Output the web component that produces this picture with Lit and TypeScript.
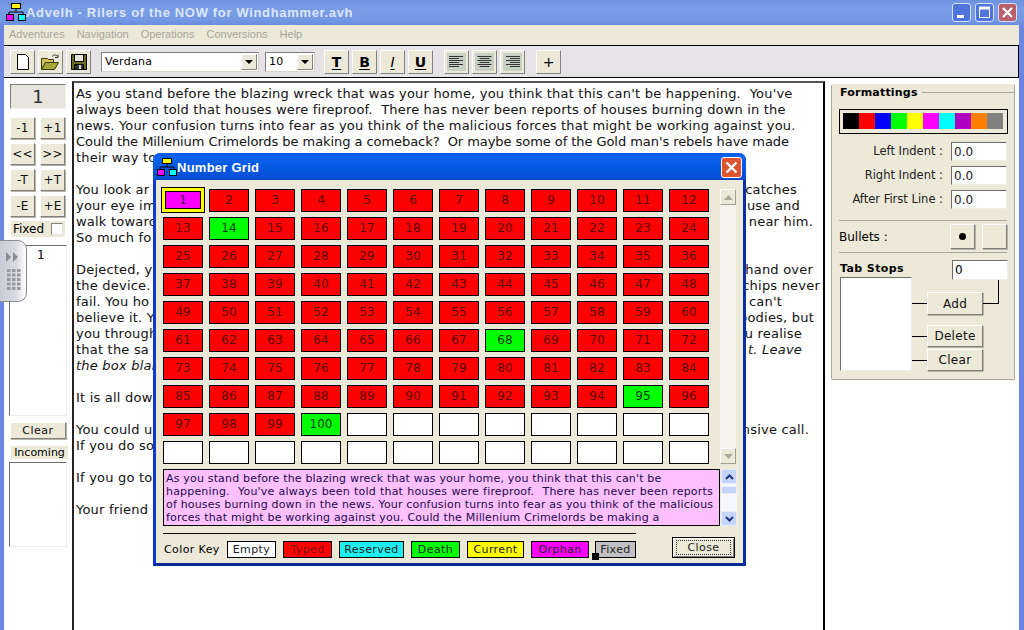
import { LitElement, html, css, svg } from 'lit';
import { customElement } from 'lit/decorators.js';

// [left part, right part, width up to the end of the right part]
const STORY: Array<[string, string?, number?]> = [
  ['As you stand before the blazing wreck that was your home, you think that this can\'t be happening.  You\'ve'],
  ['always been told that houses were fireproof.  There has never been reports of houses burning down in the'],
  ['news. Your confusion turns into fear as you think of the malicious forces that might be working against you.'],
  ['Could the Millenium Crimelords be making a comeback?  Or maybe some of the Gold man\'s rebels have made'],
  ['their way to'],
  [''],
  ['You look ar', 'catches', 721],
  ['your eye im', 'use and', 724],
  ['walk toward', 't near him.', 737],
  ['So much fo'],
  [''],
  ['Dejected, y', 'hand over', 737],
  ['the device.', 'chips never', 744],
  ['fail. You ho', 'can\'t', 706],
  ['believe it. Y', 'bodies, but', 738],
  ['you through', 'u realise', 726],
  ['that the sa', 't. Leave', 726],
  ['the box blan'],
  [''],
  ['It is all dow'],
  [''],
  ['You could u', 'nsive call.', 733],
  ['If you do so'],
  [''],
  ['If you go to'],
  [''],
  ['Your friend'],
];

// lines whose width drifts from the shared letter spacing
const STORY_SPACING: Record<number, number> = { 0: 0.21, 1: 0.17, 2: 0.17, 3: -0.06 };

const PREVIEW = [
  'As you stand before the blazing wreck that was your home, you think that this can\'t be',
  'happening.  You\'ve always been told that houses were fireproof.  There has never been reports',
  'of houses burning down in the news. Your confusion turns into fear as you think of the malicious',
  'forces that might be working against you. Could the Millenium Crimelords be making a',
];

const SWATCHES = ['#000', '#f00', '#00f', '#0f0', '#ff0', '#f0f', '#0ff', '#b000c0', '#ff8000', '#808080'];
const GREEN = [14, 68, 95, 100];
const KEYS: Array<[string, string, number]> = [
  ['Empty', '#fff', 49],
  ['Typed', '#f00', 49],
  ['Reserved', '#1ef0f0', 65],
  ['Death', '#0f0', 49],
  ['Current', '#ff0', 57],
  ['Orphan', '#f0f', 58],
];

const orgIcon = svg`
  <rect x="5.5" y="0.5" width="9" height="5" fill="#ff0" stroke="#000"/>
  <path d="M10 6v3M3 9h14M3 9v2M17 9v2" stroke="#000" fill="none"/>
  <rect x="0.5" y="11.5" width="7" height="6" fill="#f0f" stroke="#000"/>
  <rect x="12.5" y="11.5" width="7" height="6" fill="#0ff" stroke="#000"/>
`;

@customElement('app-root')
export class AppRoot extends LitElement {
  static styles = css`
    :host {
      display: block;
      width: 1024px;
      height: 630px;
      overflow: hidden;
      position: relative;
      font-family: "DejaVu Sans", Verdana, sans-serif;
      font-size: 12px;
      color: #000;
    }
    .win {
      height: 630px;
      display: flex;
      flex-direction: column;
      background: #6c84e2;
    }
    .titlebar {
      height: 25px;
      flex: none;
      box-sizing: border-box;
      display: flex;
      align-items: center;
      padding: 0 7px 1px 6px;
      background: linear-gradient(180deg, #6e92de 0%, #7a9de6 40%, #7398e4 80%, #6c8ddc 100%);
      color: #dbe6fa;
      font: bold 13px "Liberation Sans", Arial, sans-serif;
      letter-spacing: 0.66px;
    }
    .titlebar svg { flex: none; }
    .titlebar .cap { flex: 1; }
    .wbtn {
      width: 19px;
      height: 19px;
      margin-left: 4px;
      border: 1px solid #d6e0f6;
      border-radius: 3px;
      background: #4f74dc;
      display: flex;
      align-items: center;
      justify-content: center;
      box-sizing: border-box;
    }
    .wbtn.close { background: #b8606c; }
    .inner {
      flex: 1;
      min-height: 0;
      margin: 0 5px 0 4px;
      background: #fff;
      display: flex;
      flex-direction: column;
    }
    .menu {
      height: 20px;
      flex: none;
      box-sizing: border-box;
      padding: 0 0 2px 5px;
      background: #ece9d8;
      display: flex;
      align-items: center;
      gap: 12px;
      color: #a8a69c;
      font: 11px "Liberation Sans", Arial, sans-serif;
    }
    .toolbar {
      height: 33px;
      flex: none;
      box-sizing: border-box;
      border-top: 1px solid #000;
      border-bottom: 1px solid #000;
      border-right: 1px solid #000;
      background: #e6e3e6;
      display: flex;
      align-items: center;
      padding-left: 6px;
    }
    .tb {
      width: 25px;
      height: 24px;
      box-sizing: border-box;
      margin-right: 3px;
      background: #ece9d8;
      border: 1px solid;
      border-color: #fff #808080 #808080 #fff;
      display: flex;
      align-items: center;
      justify-content: center;
      font: bold 14px "DejaVu Sans", sans-serif;
      flex: none;
    }
    .tb.u { text-decoration: underline; text-underline-offset: 2px; }
    .tb .hl {
      width: 19px;
      height: 18px;
      background: #c8d0c4;
      display: flex;
      align-items: center;
      justify-content: center;
    }
    .combo {
      height: 20px;
      box-sizing: border-box;
      background: #fff;
      border: 1px solid;
      border-color: #808080 #d8d4c8 #d8d4c8 #808080;
      display: flex;
      align-items: center;
      justify-content: space-between;
      padding-left: 3px;
      font-size: 11px;
      letter-spacing: 0.3px;
      flex: none;
    }
    .combo .arr {
      width: 16px;
      height: 16px;
      margin-right: 1px;
      background: #ece9d8;
      border: 1px solid;
      box-sizing: border-box;
      border-color: #fff #808080 #808080 #fff;
      display: flex;
      align-items: center;
      justify-content: center;
    }
    .combo .arr i {
      border: 4px solid transparent;
      border-top: 4px solid #000;
      border-bottom: 0;
    }
    .main {
      flex: 1;
      min-height: 0;
      display: flex;
    }
    .left {
      width: 68px;
      flex: none;
      box-sizing: border-box;
      padding: 6px 0 0 5px;
      display: flex;
      flex-direction: column;
      align-items: flex-start;
    }
    .pageno {
      width: 56px;
      height: 25px;
      box-sizing: border-box;
      background: #e6e4dc;
      border: 1px solid;
      border-color: #808080 #f4f2ea #f4f2ea #808080;
      text-align: center;
      font-size: 18px;
      line-height: 23px;
      color: #333;
      margin: 0 0 8px 1px;
    }
    .nav {
      display: grid;
      grid-template-columns: 25px 25px;
      column-gap: 5px;
      row-gap: 4px;
      margin-left: 1px;
    }
    .btn {
      box-sizing: border-box;
      background: #ece9d8;
      border: 1px solid;
      border-color: #fff #808080 #808080 #fff;
      box-shadow: 1px 1px 0 #b8b4a4;
      display: flex;
      align-items: center;
      justify-content: center;
      font-size: 12px;
      color: #111;
      letter-spacing: 0.3px;
    }
    .nav .btn { height: 22px; }
    .fixed {
      width: 54px;
      height: 16px;
      background: #ece9d8;
      margin: 4px 0 0 2px;
      display: flex;
      align-items: center;
      justify-content: space-between;
      padding-left: 2px;
      box-sizing: border-box;
      font-size: 12px;
    }
    .fixed i {
      width: 10px;
      height: 10px;
      margin-right: 2px;
      background: #fff;
      border: 1px solid;
      border-color: #808080 #e8e6dc #e8e6dc #808080;
    }
    .sunken {
      box-sizing: border-box;
      background: #fff;
      border: 1px solid;
      border-color: #6e6e68 #f0eee4 #f0eee4 #6e6e68;
    }
    .pagelist {
      width: 58px;
      height: 171px;
      margin-top: 8px;
      padding: 2px 0 0 27px;
      font-size: 12px;
    }
    .clearbtn {
      width: 56px;
      height: 17px;
      margin: 6px 0 0 1px;
      padding-bottom: 1px;
      font-size: 11px;
      letter-spacing: 0.5px;
    }
    .incoming {
      width: 57px;
      height: 13px;
      margin: 7px 0 3px 2px;
      background: #ece9d8;
      font-size: 11px;
      line-height: 13px;
      text-align: center;
    }
    .inbox { width: 58px; height: 85px; }
    .story {
      width: 753px;
      flex: none;
      box-sizing: border-box;
      margin-top: 3px;
      border: 2px solid #000;
      border-left-color: #222;
      border-top-color: #555;
      border-bottom: none;
      padding: 3px 0 0 2px;
      font-size: 13px;
      line-height: 16px;
      letter-spacing: 0.21px;
      color: #111;
      overflow: hidden;
    }
    .line {
      height: 16px;
      white-space: pre;
      display: flex;
      justify-content: space-between;
    }
    .line em { font-style: italic; }
    .side {
      width: 184px;
      height: 296px;
      margin: 6px 0 0 6px;
      flex: none;
      box-sizing: border-box;
      background: #ece9d8;
      border: 1px solid #a8a698;
      border-top-color: #ece9d8;
      border-radius: 2px;
    }
    .side .legend {
      font: bold 11px "DejaVu Sans", sans-serif;
      padding: 0 8px;
      height: 15px;
      line-height: 15px;
      letter-spacing: 0.2px;
      display: flex;
      align-items: center;
      gap: 4px;
    }
    .side .legend::after {
      content: "";
      flex: 1;
      height: 1px;
      background: #a8a698;
      margin-right: -8px;
    }
    .palette {
      width: 169px;
      height: 25px;
      box-sizing: border-box;
      margin: 9px 0 0 7px;
      border: 1px solid #000;
      padding: 3px;
      display: flex;
      background: #ece9d8;
    }
    .palette i { width: 16px; height: 16px; flex: none; }
    .row {
      display: flex;
      align-items: center;
      justify-content: flex-end;
      height: 19px;
      margin: 5px 7px 0 0;
      font-size: 11.5px;
      color: #222;
    }
    .row span { margin: -2px 8px 0 0; }
    .row .sunken {
      width: 56px;
      height: 19px;
      font-size: 12px;
      line-height: 18px;
      padding-left: 2px;
    }
    .first { margin-top: 8px; }
    .rule { height: 1px; background: #a8a698; margin: 0 7px; }
    .bullets {
      display: flex;
      align-items: center;
      height: 25px;
      margin: 3px 7px;
      font-size: 12px;
    }
    .bullets span { flex: 1; }
    .bullets .btn { width: 25px; height: 25px; margin-left: 7px; }
    .bullets .btn i {
      width: 7px;
      height: 7px;
      border-radius: 50%;
      background: #000;
    }
    .tabs {
      display: grid;
      grid-template-columns: 72px 15px 56px 16px;
      grid-template-rows: 17px 15px 23px 10px 22px 2px 22px;
      margin: 7px 0 0 8px;
    }
    .tabs b {
      grid-column: 1 / 3;
      grid-row: 1;
      font-size: 11px;
      line-height: 13px;
      letter-spacing: 0.4px;
      margin-top: 2px;
    }
    .tabs .tabinput {
      grid-column: 3 / 5;
      grid-row: 1 / 3;
      width: 56px;
      height: 20px;
      margin-left: 25px;
      font-size: 12px;
      line-height: 18px;
      padding-left: 2px;
    }
    .tabs .tablist { grid-column: 1; grid-row: 2 / 8; height: 94px; }
    .tabs .btn { grid-column: 3; font-size: 12px; letter-spacing: 0.3px; }
    .tick {
      grid-column: 2;
      height: 1px;
      background: #000;
      align-self: center;
    }
    .elbow {
      grid-column: 4;
      grid-row: 2 / 4;
      box-sizing: border-box;
      border-right: 1px solid #000;
      border-bottom: 1px solid #000;
      height: 24px;
      margin-top: 3px;
      width: 16px;
      align-self: start;
      z-index: 1;
    }
    /* floating dialog */
    .dialog {
      position: absolute;
      left: 153px;
      top: 153px;
      width: 593px;
      height: 413px;
      box-sizing: border-box;
      background: #ece9d8;
      border: 3px solid #0a3bd0;
      border-top: none;
      border-bottom-color: #0a2a9c;
      border-right-color: #0a2ea8;
      border-radius: 7px 7px 0 0;
    }
    .dtitle {
      height: 27px;
      box-sizing: border-box;
      margin: 0 -3px;
      display: flex;
      align-items: center;
      padding: 1px 4px 0 4px;
      background: linear-gradient(180deg, #0a5ae8 0%, #0a64f0 15%, #0456de 60%, #0a50d8 90%, #0a46c0 100%);
      color: #fff;
      font: bold 13px "Liberation Sans", Arial, sans-serif;
      letter-spacing: 0.25px;
      border-radius: 7px 7px 0 0;
    }
    .dtitle .cap { flex: 1; }
    .dclose {
      width: 21px;
      height: 21px;
      box-sizing: border-box;
      border: 1px solid #fff;
      border-radius: 3px;
      background: #dc5430;
      display: flex;
      align-items: center;
      justify-content: center;
    }
    .dbody { padding: 9px 0 0 7px; }
    .top { display: flex; }
    .grid {
      display: grid;
      grid-template-columns: repeat(12, 40px);
      grid-auto-rows: 23px;
      column-gap: 6px;
      row-gap: 5px;
    }
    .cell {
      box-sizing: border-box;
      border: 1px solid #000;
      background: #f00;
      color: #5a0a0a;
      text-align: center;
      font-size: 12px;
      line-height: 20px;
    }
    .cell.empty { background: #fff; }
    .cell.green { background: #0f0; color: #063806; }
    .cell.cur {
      margin: 2px 2px 3px;
      background: #f0f;
      line-height: 16px;
      color: #4a0a4a;
      box-shadow: 0 0 0 3px #ff0, 0 0 0 4px #000;
    }
    .vscroll {
      width: 16px;
      margin-left: 11px;
      background: #f6f4ec;
      display: flex;
      flex-direction: column;
      justify-content: space-between;
    }
    .vscroll div {
      height: 16px;
      box-sizing: border-box;
      background: #ece9d8;
      border: 1px solid;
      border-color: #fff #a0a090 #a0a090 #fff;
      display: flex;
      align-items: center;
      justify-content: center;
    }
    .preview { display: flex; margin-top: 5px; height: 57px; }
    .pink {
      width: 557px;
      box-sizing: border-box;
      border: 1px solid #000;
      background: #ffc0ff;
      padding: 2px 0 0 2px;
      font-size: 11px;
      line-height: 13px;
      letter-spacing: 0.18px;
      white-space: pre;
      color: #1a0a50;
      overflow: hidden;
    }
    .pink .wide { word-spacing: 0.5px; }
    .pscroll {
      width: 16px;
      margin-left: 1px;
      background: #f6f8fe;
      display: flex;
      flex-direction: column;
    }
    .pscroll div {
      height: 15px;
      box-sizing: border-box;
      background: #c4d4fa;
      border: 1px solid #e8eefc;
      border-radius: 2px;
      display: flex;
      align-items: center;
      justify-content: center;
    }
    .pscroll .thumb { height: 8px; margin-top: 2px; }
    .pscroll .dn { margin-top: auto; }
    .footer { display: flex; margin-top: 7px; }
    .keycol { width: 473px; flex: none; }
    .keyrule { height: 1px; background: #000; }
    .keys {
      margin-top: 7px;
      display: flex;
      align-items: center;
      height: 17px;
      font-size: 11px;
      letter-spacing: 0.4px;
    }
    .keys .lbl { margin: 0 8px 0 1px; width: 55px; white-space: nowrap; }
    .key {
      height: 17px;
      box-sizing: border-box;
      border: 1px solid #000;
      text-align: center;
      line-height: 15px;
      margin-right: 7px;
      flex: none;
      color: #222;
    }
    .key.red { color: #7a1010; }
    .key.fix {
      background: #c0c0c0;
      width: 41px;
      margin: 0 0 0 -1px;
      position: relative;
    }
    .key.fix::after {
      content: "";
      position: absolute;
      left: -4px;
      top: 11px;
      width: 7px;
      height: 7px;
      background: #000;
    }
    .closebtn {
      width: 63px;
      height: 21px;
      margin: 4px 0 0 36px;
      box-sizing: border-box;
      background: #ece9d8;
      border: 1px solid #000;
      box-shadow: inset 1px 1px 0 #fff, inset -1px -1px 0 #808080;
      display: flex;
      align-items: center;
      justify-content: center;
      font-size: 11px;
      letter-spacing: 0.4px;
      color: #222;
      flex: none;
    }
    .closebtn span {
      width: 55px;
      height: 15px;
      line-height: 13px;
      box-sizing: border-box;
      border: 1px dotted #333;
      text-align: center;
    }
    /* pager handle over the left column */
    .handle {
      position: absolute;
      left: 0;
      top: 240px;
      width: 27px;
      height: 62px;
      box-sizing: border-box;
      border: 1px solid #8a8a90;
      border-left: none;
      border-radius: 0 9px 9px 0;
      background: linear-gradient(90deg, #c8ccd8 0%, #d8dae0 60%, rgba(255,255,255,0.85) 100%);
    }
    .handle svg { display: block; margin: 8px 0 0 6px; }
  `;

  private icon(kind: string) {
    if (kind === 'new') {
      return html`<svg width="14" height="16" viewBox="0 0 14 16"><path d="M1.5.5h8l3 3v12h-11z" fill="#fff" stroke="#000"/></svg>`;
    }
    if (kind === 'open') {
      return html`<svg width="19" height="16" viewBox="0 0 19 16"><path d="M.5 4.5h6l1 1h5v3h-8l-4 7z" fill="#d8c060" stroke="#3a3a10"/><path d="M4.5 8.5h13l-4 7h-13z" fill="#a8a838" stroke="#3a3a10"/><path d="M11 2.5c2-2 4-2 5.5 0M17 .5v3h-3" fill="none" stroke="#333"/></svg>`;
    }
    return html`<svg width="16" height="16" viewBox="0 0 16 16"><path d="M.5.5h15v15H.5z" fill="#6a6a20" stroke="#000"/><path d="M3.5.5h9v7h-9z" fill="#e8e8d8" stroke="#000"/><path d="M3.5 10.5h9v5h-9z" fill="#333" stroke="#000"/><path d="M9 11v4" stroke="#ddd" stroke-width="2"/></svg>`;
  }

  private alignIcon(a: 'l' | 'c' | 'r') {
    const rows = [14, 10, 14, 10, 14, 10];
    return html`<svg width="15" height="12" viewBox="0 0 15 12">
      ${rows.map((w, i) => {
        const x = a === 'l' ? 0 : a === 'c' ? (15 - w) / 2 : 15 - w;
        return svg`<rect x=${x} y=${i * 2} width=${w} height="1" fill="#333"/>`;
      })}
    </svg>`;
  }

  private renderLine(l: [string, string?, number?], i: number) {
    const [a, b, w] = l;
    if (i === 17) return html`<div class="line"><em>${a}</em></div>`;
    if (!b) {
      const sp = STORY_SPACING[i];
      return html`<div class="line" style=${sp === undefined ? '' : `letter-spacing:${sp}px`}>${a}</div>`;
    }
    return html`<div class="line" style="width:${w}px"><span>${a}</span>${i === 16 ? html`<em>${b}</em>` : html`<span>${b}</span>`}</div>`;
  }

  private renderCell(n: number) {
    if (n === 1) return html`<div class="cell cur">1</div>`;
    if (n > 100) return html`<div class="cell empty"></div>`;
    return html`<div class="cell ${GREEN.includes(n) ? 'green' : ''}">${n}</div>`;
  }

  render() {
    const cells = Array.from({ length: 120 }, (_, i) => i + 1);
    return html`
      <div class="win">
        <div class="titlebar">
          <svg width="20" height="18" viewBox="0 0 20 18">${orgIcon}</svg>
          <span class="cap">Advelh - Rilers of the NOW for Windhammer.avh</span>
          <div class="wbtn"><svg width="13" height="13" viewBox="0 0 13 13"><rect x="2" y="9" width="7" height="3" fill="#fff"/></svg></div>
          <div class="wbtn"><svg width="13" height="13" viewBox="0 0 13 13"><path d="M1.5 1.5h10v10h-10z" fill="none" stroke="#fff"/><path d="M1 2h11" stroke="#fff" stroke-width="3"/></svg></div>
          <div class="wbtn close"><svg width="13" height="13" viewBox="0 0 13 13"><path d="M2 2l9 9M11 2l-9 9" stroke="#fff" stroke-width="2.2"/></svg></div>
        </div>
        <div class="inner">
          <div class="menu">
            <span>Adventures</span><span>Navigation</span><span>Operations</span><span>Conversions</span><span>Help</span>
          </div>
          <div class="toolbar">
            <div class="tb">${this.icon('new')}</div>
            <div class="tb">${this.icon('open')}</div>
            <div class="tb">${this.icon('save')}</div>
            <div class="combo" style="width:158px;margin-left:7px"><span>Verdana</span><div class="arr"><i></i></div></div>
            <div class="combo" style="width:50px;margin-left:6px"><span>10</span><div class="arr"><i></i></div></div>
            <div class="tb u" style="margin-left:9px">T</div>
            <div class="tb u">B</div>
            <div class="tb u" style="font-style:italic;font-weight:400">I</div>
            <div class="tb u">U</div>
            <div class="tb" style="margin-left:8px"><div class="hl">${this.alignIcon('l')}</div></div>
            <div class="tb"><div class="hl">${this.alignIcon('c')}</div></div>
            <div class="tb"><div class="hl">${this.alignIcon('r')}</div></div>
            <div class="tb" style="margin-left:8px;font-weight:400">+</div>
          </div>
          <div class="main">
            <div class="left">
              <div class="pageno">1</div>
              <div class="nav">
                <div class="btn">-1</div><div class="btn">+1</div>
                <div class="btn">&lt;&lt;</div><div class="btn">&gt;&gt;</div>
                <div class="btn">-T</div><div class="btn">+T</div>
                <div class="btn">-E</div><div class="btn">+E</div>
              </div>
              <div class="fixed">Fixed<i></i></div>
              <div class="sunken pagelist">1</div>
              <div class="btn clearbtn">Clear</div>
              <div class="incoming">Incoming</div>
              <div class="sunken inbox"></div>
            </div>
            <div class="story">${STORY.map((l, i) => this.renderLine(l, i))}</div>
            <div class="side">
              <div class="legend">Formattings</div>
              <div class="palette">${SWATCHES.map((c) => html`<i style="background:${c}"></i>`)}</div>
              <div class="row first"><span>Left Indent :</span><div class="sunken">0.0</div></div>
              <div class="row"><span>Right Indent :</span><div class="sunken">0.0</div></div>
              <div class="row" style="margin-bottom:11px"><span>After First Line :</span><div class="sunken">0.0</div></div>
              <div class="rule"></div>
              <div class="bullets">
                <span>Bullets :</span>
                <div class="btn"><i></i></div>
                <div class="btn"></div>
              </div>
              <div class="rule"></div>
              <div class="tabs">
                <b>Tab Stops</b>
                <div class="sunken tabinput">0</div>
                <div class="sunken tablist"></div>
                <div class="tick" style="grid-row:3"></div>
                <div class="btn" style="grid-row:3">Add</div>
                <div class="elbow"></div>
                <div class="tick" style="grid-row:5"></div>
                <div class="btn" style="grid-row:5">Delete</div>
                <div class="tick" style="grid-row:7"></div>
                <div class="btn" style="grid-row:7">Clear</div>
              </div>
            </div>
          </div>
        </div>
      </div>

      <div class="handle">
        <svg width="16" height="48" viewBox="0 0 16 48">
          <path d="M0 3l5 5-5 5zM7 3l5 5-5 5z" fill="#8c8c90"/>
          ${[0, 1, 2, 3, 4].map((r) =>
            [0, 1, 2].map((c) => svg`<rect x=${1 + c * 5} y=${20 + r * 4.5} width="3.5" height="3" fill="#9a9a9e"/>`)
          )}
        </svg>
      </div>

      <div class="dialog">
        <div class="dtitle">
          <svg width="20" height="18" viewBox="0 0 20 18">${orgIcon}</svg>
          <span class="cap">Number Grid</span>
          <div class="dclose"><svg width="15" height="15" viewBox="0 0 15 15"><path d="M2.5 2.5l10 10M12.5 2.5l-10 10" stroke="#fff" stroke-width="2.4"/></svg></div>
        </div>
        <div class="dbody">
          <div class="top">
            <div class="grid">${cells.map((n) => this.renderCell(n))}</div>
            <div class="vscroll">
              <div><svg width="9" height="5" viewBox="0 0 9 5"><path d="M0 5l4.5-5 4.5 5z" fill="#a8a898"/></svg></div>
              <div><svg width="9" height="5" viewBox="0 0 9 5"><path d="M0 0l4.5 5 4.5-5z" fill="#a8a898"/></svg></div>
            </div>
          </div>
          <div class="preview">
            <div class="pink">${PREVIEW.map((p, i) => html`<div class=${i === 1 ? 'wide' : ''}>${p}</div>`)}</div>
            <div class="pscroll">
              <div><svg width="9" height="6" viewBox="0 0 9 6"><path d="M1 5l3.5-3.5L8 5" fill="none" stroke="#203a80" stroke-width="2"/></svg></div>
              <div class="thumb"></div>
              <div class="dn"><svg width="9" height="6" viewBox="0 0 9 6"><path d="M1 1l3.5 3.5L8 1" fill="none" stroke="#203a80" stroke-width="2"/></svg></div>
            </div>
          </div>
          <div class="footer">
            <div class="keycol">
              <div class="keyrule"></div>
              <div class="keys">
                <span class="lbl">Color Key</span>
                ${KEYS.map(([t, c, w]) => html`<div class="key ${t === 'Typed' ? 'red' : ''}" style="background:${c};width:${w}px">${t}</div>`)}
                <div class="key fix">Fixed</div>
              </div>
            </div>
            <div class="closebtn"><span>Close</span></div>
          </div>
        </div>
      </div>
    `;
  }
}
